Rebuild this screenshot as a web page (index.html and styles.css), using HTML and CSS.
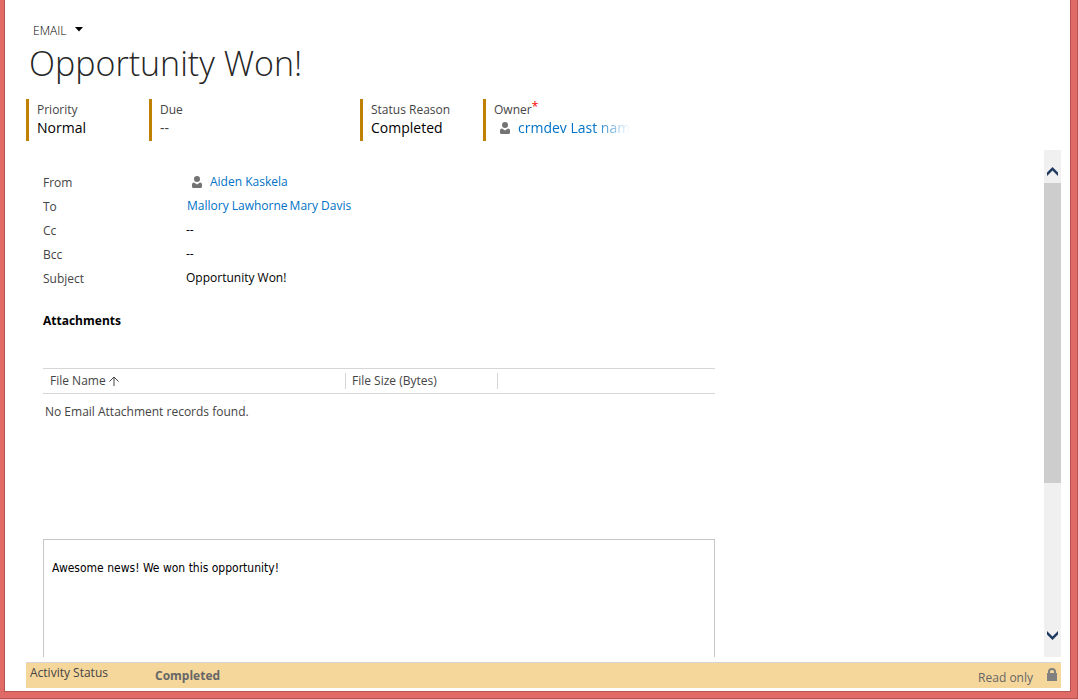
FILE: index.html
```html
<!DOCTYPE html>
<html lang="en">
<head>
    <meta charset="UTF-8">
    <meta name="viewport" content="width=device-width, initial-scale=1.0">
    <title>Email: Opportunity Won!</title>
    <link rel="stylesheet" href="styles.css">
</head>
<body>
    <svg class="sprite" aria-hidden="true">
        <symbol id="person" viewBox="0 0 12 14">
            <circle cx="6" cy="4" r="3"/>
            <path d="M1 9.5Q1 7.5 3 7.5L6 9.5L9 7.5Q11 7.5 11 9.5V11.5Q11 13 9.500 13H2.500Q1 13 1 11.500Z"/>
        </symbol>
    </svg>

    <div class="window">
        <header class="header">
            <button class="form-type" type="button">EMAIL
                <svg width="8" height="5" viewBox="0 0 8 5"><path d="M0 0H8L4 4.500Z"/></svg>
            </button>
            <h1>Opportunity Won!</h1>
            <div class="tiles">
                <div class="tile">
                    <span class="tile-label">Priority</span>
                    <span class="tile-value">Normal</span>
                </div>
                <div class="tile wide">
                    <span class="tile-label">Due</span>
                    <span class="tile-value empty">--</span>
                </div>
                <div class="tile">
                    <span class="tile-label">Status Reason</span>
                    <span class="tile-value">Completed</span>
                </div>
                <div class="tile owner">
                    <span class="tile-label">Owner<span class="required">*</span></span>
                    <span class="tile-value"><svg class="person"><use href="#person"/></svg><a href="#">crmdev Last name</a></span>
                </div>
            </div>
        </header>

        <div class="body">
            <main class="form">
                <dl class="fields">
                    <dt>From</dt>
                    <dd><svg class="person"><use href="#person"/></svg><a href="#">Aiden Kaskela</a></dd>
                    <dt>To</dt>
                    <dd class="people"><a href="#">Mallory Lawhorne</a><a href="#">Mary Davis</a></dd>
                    <dt>Cc</dt>
                    <dd>--</dd>
                    <dt>Bcc</dt>
                    <dd>--</dd>
                    <dt>Subject</dt>
                    <dd>Opportunity Won!</dd>
                </dl>

                <h2>Attachments</h2>
                <div class="attachments">
                    <table>
                        <thead>
                            <tr>
                                <th class="col-name"><span>File Name
                                    <svg width="10" height="10" viewBox="0 0 10 10"><path d="M5 10V1M0.500 5.500L5 1L9.500 5.500"/></svg></span></th>
                                <th class="col-size"><span>File Size (Bytes)</span></th>
                                <th></th>
                            </tr>
                        </thead>
                        <tbody>
                            <tr><td colspan="3">No Email Attachment records found.</td></tr>
                        </tbody>
                    </table>
                </div>

                <div class="message">
                    <p>Awesome news! We won this opportunity!</p>
                </div>
            </main>

            <div class="scrollbar">
                <button type="button" aria-label="Scroll up">
                    <svg width="11" height="9" viewBox="0 0 11 9"><path d="M0 5.500L5.500 0L11 5.500V9L5.500 3.500L0 9Z"/></svg>
                </button>
                <div class="track"><div class="thumb"></div></div>
                <button type="button" aria-label="Scroll down">
                    <svg width="11" height="9" viewBox="0 0 11 9"><path d="M0 0L5.500 5.500L11 0V3.500L5.500 9L0 3.500Z"/></svg>
                </button>
            </div>
        </div>

        <footer class="status">
            <span class="status-label">Activity Status</span>
            <strong>Completed</strong>
            <span class="readonly">Read only</span>
            <svg width="10" height="13" viewBox="0 0 10 13"><path d="M0 5H10V13H0Z"/><path class="shackle" d="M2 6V3.500Q2 1 5 1Q8 1 8 3.500V6"/></svg>
        </footer>
    </div>
</body>
</html>
```

FILE: styles.css
```css
* {
    box-sizing: border-box;
}

body {
    margin: 0;
    padding: 0 6px 6px 4px;
    height: 100vh;
    background: #e06a65;
    border-right: 1px solid #b55350;
    border-bottom: 1px solid #b55350;
    font-family: "Open Sans", "Noto Sans", sans-serif;
    font-size: 12px;
    line-height: 16px;
    color: #444;
}

h1, h2, p, dl, dd {
    margin: 0;
}

a {
    color: #0072c6;
    text-decoration: none;
}

button {
    border: 0;
    padding: 0;
    background: none;
    font: inherit;
    color: inherit;
    cursor: pointer;
}

.sprite {
    position: absolute;
    width: 0;
    height: 0;
}

.window {
    display: flex;
    flex-direction: column;
    height: 100%;
    padding: 23px 9px 3px 21px;
    background: #fff;
    border: 1px solid #b55350;
    border-top: 0;
}

/* Header */
.header {
    flex: none;
}

.form-type {
    display: flex;
    align-items: center;
    gap: 9px;
    margin-left: 7px;
    color: #000;
    font-weight: 300;
}

.form-type svg {
    margin-bottom: 4px;
}

h1 {
    margin-left: 3px;
    font-size: 34px;
    line-height: 48px;
    font-weight: 300;
    color: #262626;
}

.tiles {
    display: flex;
    margin-top: 12px;
}

.tile {
    display: flex;
    flex-direction: column;
    width: 123px;
    height: 42px;
    padding: 3px 0 0 8px;
    border-left: 3px solid #c08000;
    white-space: nowrap;
}

.tile.wide {
    width: 211px;
}

.tile.owner {
    width: 147px;
}

.tile-value {
    display: flex;
    align-items: center;
    font-size: 14px;
    line-height: 20px;
    color: #000;
}

.tile-value.empty {
    color: #444;
}

/* long owner names fade out at the edge of the tile */
.owner .tile-value {
    overflow: hidden;
    mask-image: linear-gradient(to right, #000 100px, transparent);
}

.required {
    color: #f00;
    line-height: 8px;
    vertical-align: 3px;
}

.person {
    flex: none;
    width: 12px;
    height: 14px;
    margin: 0 7px 0 5px;
    fill: #737373;
}

/* Form */
.body {
    display: flex;
    flex: 1;
    min-height: 0;
    margin: 9px 0 5px;
}

.form {
    flex: 1;
    padding: 20px 17px 0;
    overflow: hidden;
}

.fields {
    display: grid;
    grid-template-columns: 143px 1fr;
    grid-auto-rows: 24px;
    line-height: 24px;
}

.fields dt {
    padding-top: 1px;
}

.fields dd {
    display: flex;
    align-items: center;
    color: #000;
}

.people {
    gap: 2px;
    padding-left: 1px;
}

h2 {
    margin-top: 23px;
    font-size: 12px;
    line-height: 16px;
    font-weight: 700;
    color: #000;
}

.attachments {
    max-width: 672px;
    height: 171px;
    margin-top: 39px;
}

table {
    width: 100%;
    border-collapse: collapse;
    table-layout: fixed;
}

th {
    height: 25px;
    padding: 0;
    border-top: 1px solid #d6d6d6;
    border-bottom: 1px solid #d6d6d6;
    font-weight: 400;
    text-align: left;
}

th span {
    display: block;
    height: 16px;
    padding-left: 6px;
    border-right: 1px solid #d6d6d6;
}

th svg {
    fill: none;
    stroke: #444;
    vertical-align: -1px;
}

.col-name {
    width: 303px;
}

.col-name span {
    padding-left: 7px;
}

.col-size {
    width: 152px;
}

td {
    padding: 10px 2px;
}

.message {
    max-width: 672px;
    min-height: 200px;
    padding: 20px 8px;
    border: 1px solid #c6c6c6;
    font-family: "DejaVu Sans Condensed", "DejaVu Sans", sans-serif;
    color: #000;
}

/* Scrollbar */
.scrollbar {
    display: flex;
    flex-direction: column;
    flex: none;
    width: 17px;
    background: #f0f0f0;
}

.scrollbar button {
    height: 33px;
    padding-top: 10px;
    line-height: 0;
}

.scrollbar button:last-child {
    padding: 0 0 10px;
}

.scrollbar svg {
    fill: #1f3a5f;
}

.track {
    flex: 1;
}

.thumb {
    height: 68%;
    background: #cdcdcd;
}

/* Status bar */
.status {
    display: flex;
    flex: none;
    height: 26px;
    padding: 2px 4px 0;
    background: #f5d79c;
    border-top: 1px solid #d6d6d6;
}

.status-label {
    width: 125px;
}

.status strong {
    padding-top: 3px;
    color: #666;
}

.readonly {
    margin-left: auto;
    padding-top: 5px;
    color: #666;
}

.status svg {
    margin: 3px 0 0 14px;
    fill: #808080;
}

.status .shackle {
    fill: none;
    stroke: #808080;
    stroke-width: 2;
}
```
